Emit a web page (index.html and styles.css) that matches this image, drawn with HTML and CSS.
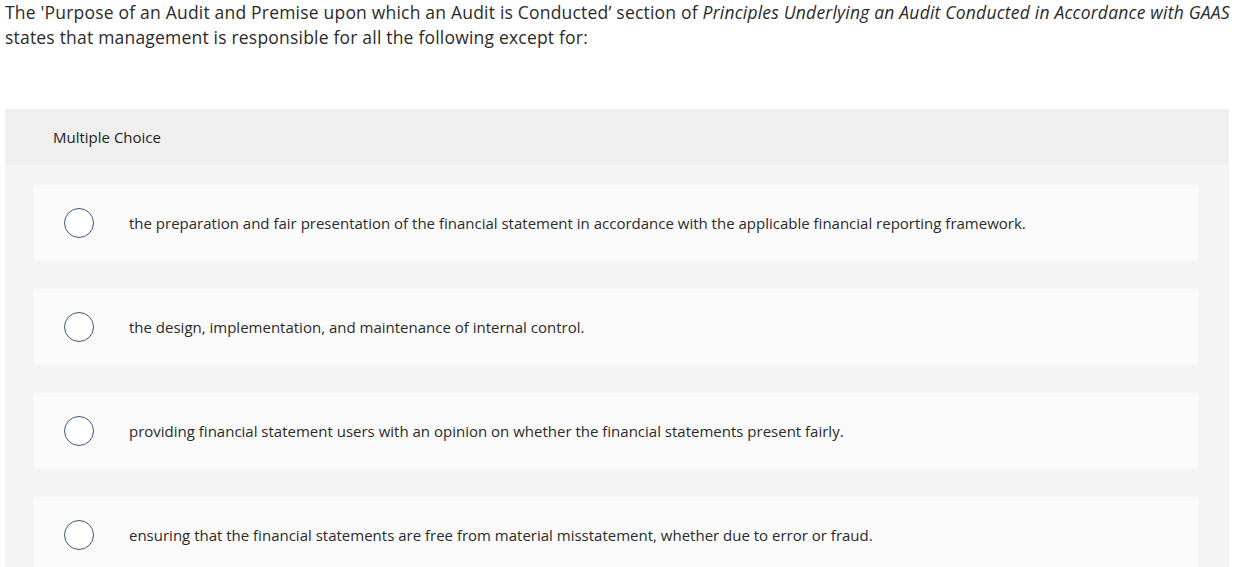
FILE: index.html
```html
<!DOCTYPE html>
<html lang="en">
<head>
    <meta charset="UTF-8">
    <title>Multiple Choice Question</title>
    <link rel="stylesheet" href="styles.css">
</head>
<body>

<div class="question">
    <p class="prompt">The 'Purpose of an Audit and Premise upon which an Audit is Conducted’ section of <em>Principles Underlying an Audit Conducted in Accordance with GAAS</em> states that management is responsible for all the following except for:</p>
</div>

<div class="panel">
    <div class="panel-header">Multiple Choice</div>
    <div class="choices">
        <label class="choice">
            <span class="radio"></span>
            <span class="choice-text">the preparation and fair presentation of the financial statement in accordance with the applicable financial reporting framework.</span>
        </label>
        <label class="choice">
            <span class="radio"></span>
            <span class="choice-text">the design, implementation, and maintenance of internal control.</span>
        </label>
        <label class="choice">
            <span class="radio"></span>
            <span class="choice-text">providing financial statement users with an opinion on whether the financial statements present fairly.</span>
        </label>
        <label class="choice">
            <span class="radio"></span>
            <span class="choice-text">ensuring that the financial statements are free from material misstatement, whether due to error or fraud.</span>
        </label>
    </div>
</div>

</body>
</html>
```

FILE: styles.css
```css
body {
    margin: 0;
    padding: 0 5px;
    width: 1232px;
    font-family: 'Open Sans', Lato, sans-serif;
    color: #333;
    background: #fff;
}

/* Question prompt */
.prompt {
    margin: 0;
    font-size: 17.5px;
    letter-spacing: 0.2px;
    line-height: 25px;
    color: #2b2b2b;
}

/* Answer panel */
.panel {
    width: 1224px;
    margin-top: 59px;
    background: #f4f4f4;
    border-radius: 3px 3px 0 0;
}

.panel-header {
    height: 56px;
    display: flex;
    align-items: center;
    padding-left: 48px;
    background: #efefef;
    font-size: 15px;
    color: #222;
}

.choices {
    display: flex;
    flex-direction: column;
    gap: 28px;
    padding: 20px 31px 0 29px;
}

.choice {
    height: 76px;
    display: flex;
    align-items: center;
    background: #fafafa;
    border-radius: 3px;
}

.radio {
    width: 28px;
    height: 28px;
    margin-left: 30px;
    border: 1.5px solid #3d5a7c;
    border-radius: 50%;
    background: #fff;
    flex-shrink: 0;
}

.choice-text {
    margin-left: 35px;
    font-size: 15px;
    color: #2b2b2b;
}
```
